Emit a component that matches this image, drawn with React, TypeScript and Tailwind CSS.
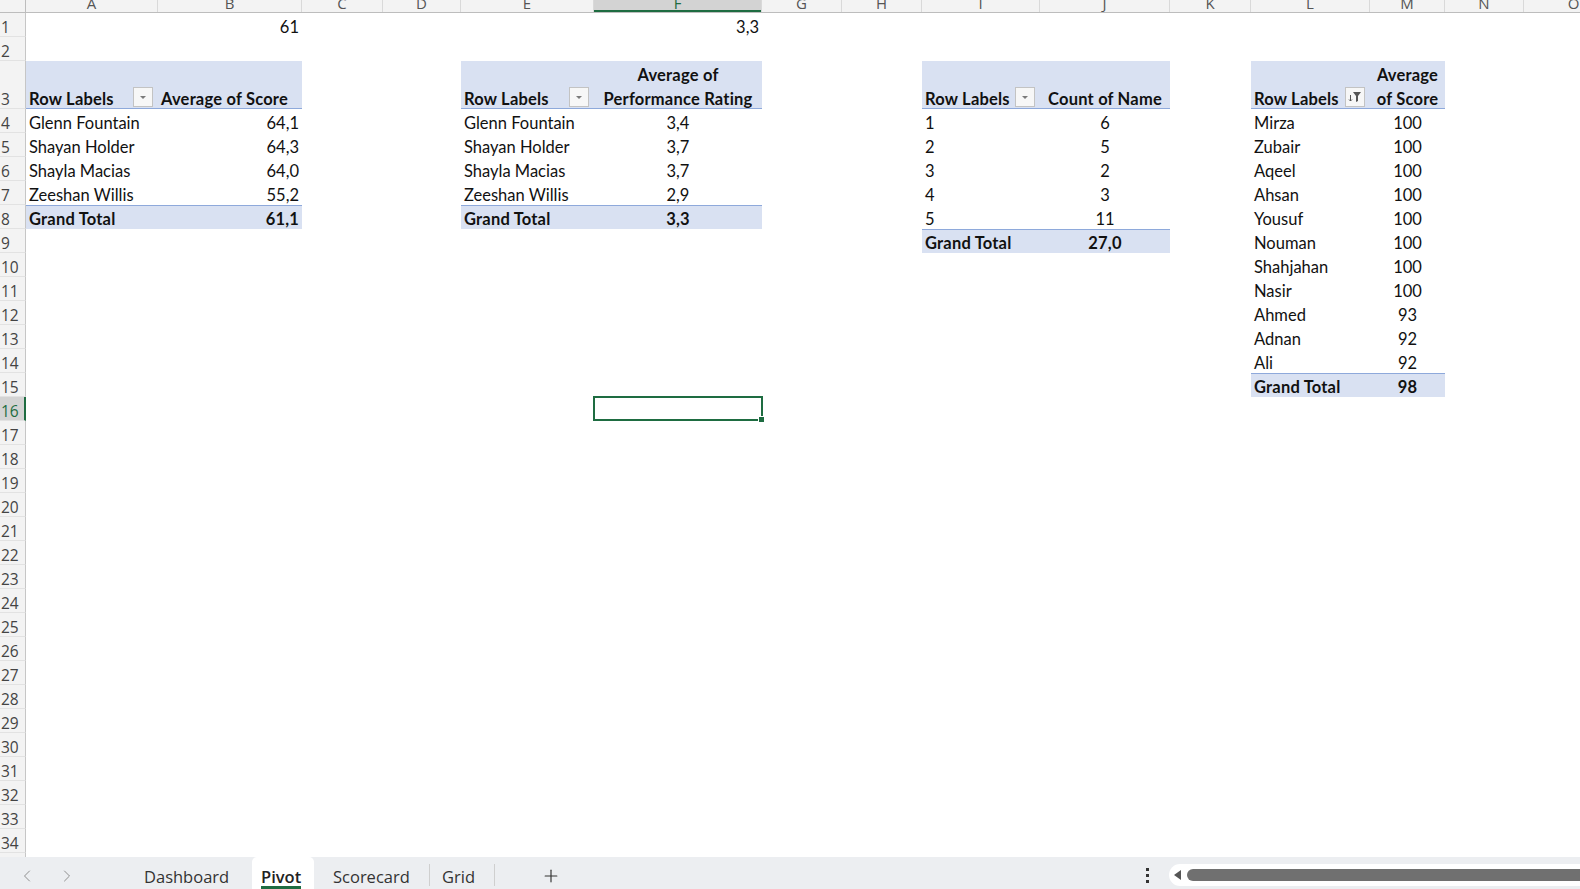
import { ChevronLeft, ChevronRight, Plus } from "lucide-react";

type Cell = {
  t?: string;
  lines?: string[];
  align?: "l" | "r" | "c";
  bold?: boolean;
  band?: "head" | "total";
  dd?: "arrow" | "filter";
};

const COLS = [
  { k: "A", w: 132 },
  { k: "B", w: 144 },
  { k: "C", w: 81 },
  { k: "D", w: 78 },
  { k: "E", w: 133 },
  { k: "F", w: 168 },
  { k: "G", w: 80 },
  { k: "H", w: 80 },
  { k: "I", w: 118 },
  { k: "J", w: 130 },
  { k: "K", w: 81 },
  { k: "L", w: 119 },
  { k: "M", w: 75 },
  { k: "N", w: 79 },
  { k: "O", w: 100 },
];

const ROW_COUNT = 35;
const ACTIVE_ROW = 16;
const ACTIVE_COL = "F";

function rowHeight(r: number) {
  return r === 3 ? 48 : 24;
}

const cells: Record<string, Cell> = {};

function put(col: string, row: number, cell: Cell) {
  cells[`${col}${row}`] = cell;
}

// builds one pivot table starting at row 3
function pivot(
  labelCol: string,
  valueCol: string,
  header: string[],
  headAlign: "l" | "c",
  valAlign: "r" | "c",
  rows: [string, string][],
  total: string,
  dd: "arrow" | "filter" = "arrow",
) {
  put(labelCol, 3, { t: "Row Labels", bold: true, band: "head", dd });
  put(valueCol, 3, { lines: header, bold: true, band: "head", align: headAlign });
  rows.forEach(([name, val], i) => {
    put(labelCol, 4 + i, { t: name });
    put(valueCol, 4 + i, { t: val, align: valAlign });
  });
  const tr = 4 + rows.length;
  put(labelCol, tr, { t: "Grand Total", bold: true, band: "total" });
  put(valueCol, tr, { t: total, bold: true, band: "total", align: valAlign });
}

put("B", 1, { t: "61", align: "r" });
put("F", 1, { t: "3,3", align: "r" });

pivot(
  "A",
  "B",
  ["Average of Score"],
  "l",
  "r",
  [
    ["Glenn Fountain", "64,1"],
    ["Shayan Holder", "64,3"],
    ["Shayla Macias", "64,0"],
    ["Zeeshan Willis", "55,2"],
  ],
  "61,1",
);

pivot(
  "E",
  "F",
  ["Average of", "Performance Rating"],
  "c",
  "c",
  [
    ["Glenn Fountain", "3,4"],
    ["Shayan Holder", "3,7"],
    ["Shayla Macias", "3,7"],
    ["Zeeshan Willis", "2,9"],
  ],
  "3,3",
);

pivot(
  "I",
  "J",
  ["Count of Name"],
  "c",
  "c",
  [
    ["1", "6"],
    ["2", "5"],
    ["3", "2"],
    ["4", "3"],
    ["5", "11"],
  ],
  "27,0",
);

pivot(
  "L",
  "M",
  ["Average", "of Score"],
  "c",
  "c",
  [
    ["Mirza", "100"],
    ["Zubair", "100"],
    ["Aqeel", "100"],
    ["Ahsan", "100"],
    ["Yousuf", "100"],
    ["Nouman", "100"],
    ["Shahjahan", "100"],
    ["Nasir", "100"],
    ["Ahmed", "93"],
    ["Adnan", "92"],
    ["Ali", "92"],
  ],
  "98",
  "filter",
);

function DropButton({ kind }: { kind: "arrow" | "filter" }) {
  return (
    <span className="mb-[1px] mr-[2px] flex h-[20px] w-[20px] shrink-0 items-center justify-center border border-[#c3c3c3] bg-[#f7f7f7]">
      {kind === "arrow" ? (
        <svg width="8" height="5" viewBox="0 0 8 5">
          <path d="M1 1h6L4 4z" fill="#7a7a7a" />
        </svg>
      ) : (
        <svg width="14" height="12" viewBox="0 0 14 12">
          <path d="M2.5 4v6M1 8.5l1.5 1.5 1.5-1.5" stroke="#555" strokeWidth="1" fill="none" />
          <path d="M5 1h8L10 5v5L8 11V5z" fill="#555" />
        </svg>
      )}
    </span>
  );
}

function GridCell({ col, row, w }: { col: string; row: number; w: number }) {
  const c = cells[`${col}${row}`];
  const active = col === ACTIVE_COL && row === ACTIVE_ROW;
  const band =
    c?.band === "head"
      ? "bg-[#d9e1f2] border-b border-[#8ea9db]"
      : c?.band === "total"
        ? "bg-[#d9e1f2] border-t border-[#8ea9db]"
        : "";
  const justify =
    c?.align === "r" ? "justify-end text-right" : c?.align === "c" ? "justify-center text-center" : "justify-start";

  return (
    <div
      className={`relative flex h-full shrink-0 items-end px-[3px] ${band} ${justify} ${c?.bold ? "font-bold tracking-[0.2px]" : ""}`}
      style={{ width: w }}
    >
      {c?.lines ? (
        <div className="relative top-[3px] flex flex-col leading-[24px]">
          {c.lines.map((l) => (
            <span key={l} className="whitespace-nowrap">
              {l}
            </span>
          ))}
        </div>
      ) : c?.dd ? (
        <div className="flex w-full items-end justify-between">
          <span className="relative top-[3px] whitespace-nowrap leading-[24px]">{c.t}</span>
          <DropButton kind={c.dd} />
        </div>
      ) : c?.t ? (
        <span className="whitespace-nowrap leading-[19px]">{c.t}</span>
      ) : null}
      {active && (
        <div className="absolute -left-[1px] -right-[1px] -top-[1px] bottom-0 border-2 border-[#1e6c41]">
          <span className="absolute -bottom-[4px] -right-[4px] h-[7px] w-[7px] border border-white bg-[#1e6c41]" />
        </div>
      )}
    </div>
  );
}

function ColumnHeader() {
  return (
    <div className="flex h-[13px] shrink-0 overflow-hidden border-b border-[#bdbdbd] bg-[#f3f3f3] font-['Open_Sans',sans-serif] text-[15px] text-[#555]">
      <div className="h-full w-[26px] shrink-0 border-r border-[#bdbdbd]" />
      {COLS.map((c) => {
        const active = c.k === ACTIVE_COL;
        return (
          <div
            key={c.k}
            className={`relative h-full shrink-0 border-r border-[#d9d9d9] ${active ? "bg-[#d3d3d3] text-[#1e6c41]" : ""}`}
            style={{ width: c.w }}
          >
            <div className="-mt-[9px] text-center leading-[24px]">{c.k}</div>
            {active && <div className="absolute bottom-0 left-0 right-0 h-[2px] bg-[#1e6c41]" />}
          </div>
        );
      })}
    </div>
  );
}

function SheetTabs() {
  const tabs = [
    { name: "Dashboard", w: 133, pl: "pl-[25px]" },
    { name: "Pivot", w: 62, pl: "pl-[9px]", active: true },
    { name: "Scorecard", w: 116, pl: "pl-[19px]" },
    { name: "Grid", w: 65, pl: "pl-[12px]" },
  ];
  return (
    <div className="flex h-[32px] shrink-0 items-stretch bg-[#eceef1] font-['Open_Sans',sans-serif] text-[16.5px] text-[#333]">
      <div className="flex w-[94px] items-center pt-[5px] text-[#8f8f8f]">
        <span className="flex w-[40px] justify-center pl-[14px]">
          <ChevronLeft size={20} strokeWidth={1.2} />
        </span>
        <span className="flex w-[40px] justify-center pl-[14px]">
          <ChevronRight size={20} strokeWidth={1.2} />
        </span>
      </div>
      <div className="ml-[25px] flex items-stretch">
        {tabs.map((t, i) => (
          <div
            key={t.name}
            className={`relative flex items-stretch justify-start ${t.pl} ${t.active ? "rounded-t-[5px] bg-white font-semibold text-[#222]" : ""}`}
            style={{ width: t.w }}
          >
            <span className="relative flex items-center pt-[8px]">
              {t.name}
              {t.active && <span className="absolute bottom-0 left-0 right-0 h-[3px] bg-[#1e6c41]" />}
            </span>
            {i >= 2 && <span className="absolute right-0 top-[7px] h-[22px] w-px bg-[#cfcfcf]" />}
          </div>
        ))}
      </div>
      <div className="ml-[46px] flex items-center pt-[5px] text-[#333]">
        <Plus size={20} strokeWidth={1.4} />
      </div>
      <div className="flex-1" />
      <div className="flex w-[20px] flex-col items-center justify-center gap-[3px] pt-[4px]">
        <span className="h-[3px] w-[3px] bg-[#333]" />
        <span className="h-[3px] w-[3px] bg-[#333]" />
        <span className="h-[3px] w-[3px] bg-[#333]" />
      </div>
      <div className="ml-[12px] flex w-[411px] items-center pt-[4px]">
        <div className="flex h-[22px] w-full items-center rounded-l-full bg-white pl-[5px]">
          <svg width="8" height="10" viewBox="0 0 8 10">
            <path d="M7 0v10L0 5z" fill="#555" />
          </svg>
          <div className="ml-[5px] h-[12px] flex-1 rounded-l-full bg-[#707070]" />
        </div>
      </div>
    </div>
  );
}

export default function App() {
  const rows = Array.from({ length: ROW_COUNT }, (_, i) => i + 1);
  return (
    <div className="flex h-[889px] w-[1580px] flex-col overflow-hidden bg-white font-[Lato,sans-serif] text-[16.5px] text-[#111]">
      <ColumnHeader />
      <div className="flex-1 overflow-hidden">
        {rows.map((r) => {
          const active = r === ACTIVE_ROW;
          return (
            <div key={r} className="flex" style={{ height: rowHeight(r) }}>
              <div
                className={`flex h-full w-[26px] shrink-0 items-end border-b border-[#e2e2e2] pl-[1px] font-['Open_Sans',sans-serif] text-[15.5px] ${
                  active
                    ? "border-r-2 border-r-[#1e6c41] bg-[#d3d3d3] text-[#1e6c41]"
                    : "border-r border-r-[#c6c6c6] bg-[#f3f3f3] text-[#444]"
                }`}
              >
                <span className="leading-[18px]">{r}</span>
              </div>
              {COLS.map((c) => (
                <GridCell key={c.k} col={c.k} row={r} w={c.w} />
              ))}
            </div>
          );
        })}
      </div>
      <SheetTabs />
    </div>
  );
}
